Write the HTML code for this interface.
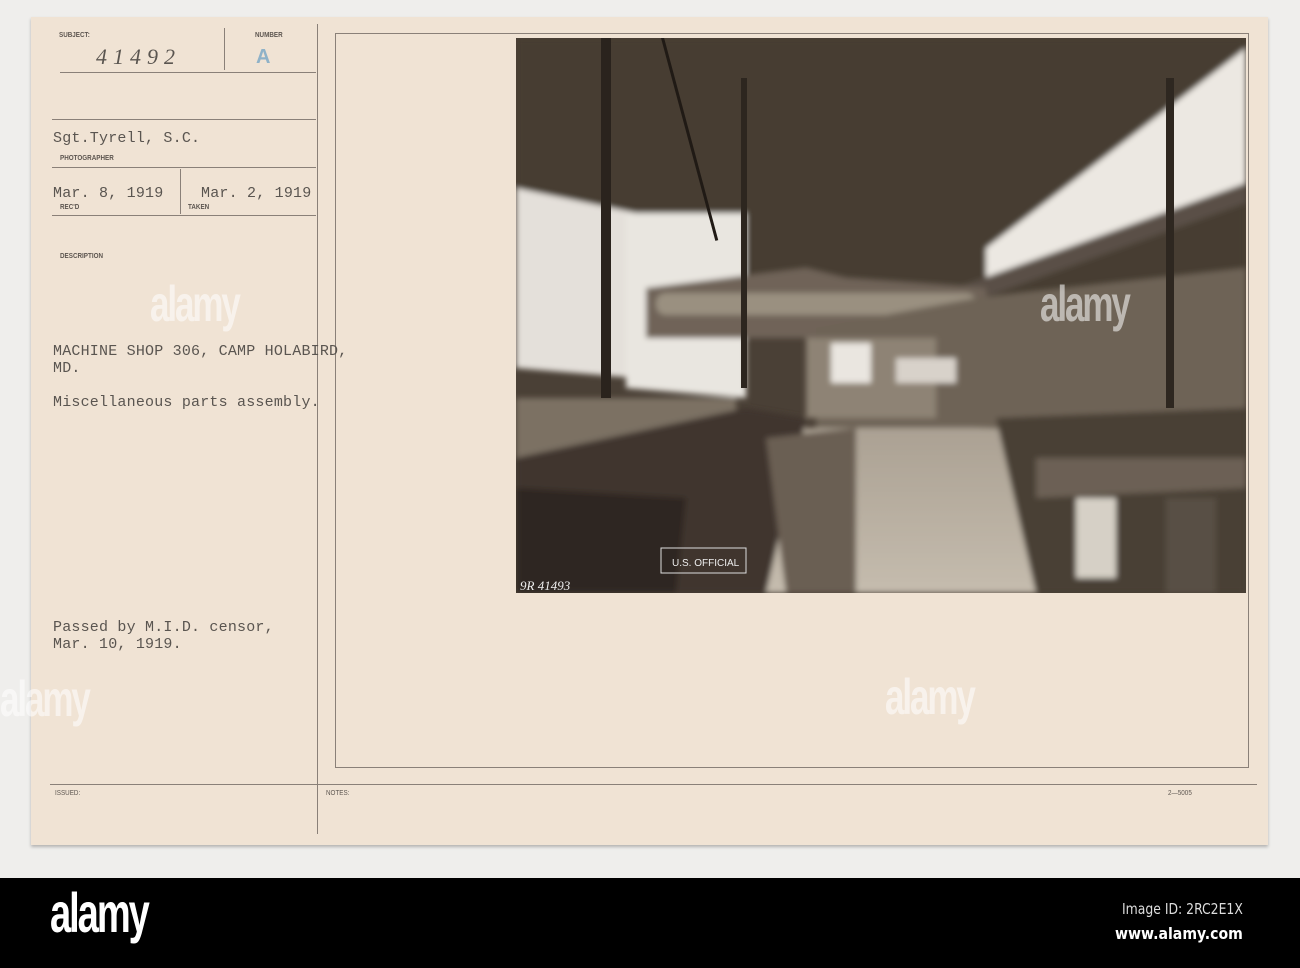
<!DOCTYPE html>
<html><head><meta charset="utf-8"><style>
body{margin:0;width:1300px;height:968px;background:#efeeec;position:relative;overflow:hidden;font-family:"Liberation Mono",monospace}
.card{position:absolute;left:31px;top:17px;width:1237px;height:828px;background:#f0e3d4;box-shadow:0 2px 3px rgba(0,0,0,.25)}
.a{position:absolute}
.h{position:absolute;height:1px;background:#8a8078}
.v{position:absolute;width:1px;background:#8a8078}
.lbl{position:absolute;font-family:"Liberation Sans",sans-serif;font-weight:bold;font-size:7px;color:#5d5650;transform:scaleX(.9);transform-origin:left}
.t{position:absolute;font-size:15px;color:#5a5550;white-space:pre;letter-spacing:.2px}
.wm{position:absolute;font-family:"Liberation Sans",sans-serif;font-weight:bold;color:rgba(255,255,255,.55);letter-spacing:-3px;transform:scaleX(.7);transform-origin:left}
.bar{position:absolute;left:0;top:878px;width:1300px;height:90px;background:#000}
</style></head><body>
<div class="card"></div>
<div class="h" style="left:60px;top:72px;width:256px"></div>
<div class="v" style="left:224px;top:28px;height:42px"></div>
<div class="h" style="left:52px;top:119px;width:264px"></div>
<div class="h" style="left:52px;top:167px;width:264px"></div>
<div class="v" style="left:180px;top:169px;height:45px"></div>
<div class="h" style="left:52px;top:215px;width:264px"></div>
<div class="v" style="left:317px;top:24px;height:810px"></div>
<div class="v" style="left:335px;top:33px;height:734px"></div>
<div class="h" style="left:335px;top:33px;width:913px"></div>
<div class="v" style="left:1248px;top:33px;height:734px"></div>
<div class="h" style="left:335px;top:767px;width:914px"></div>
<div class="h" style="left:50px;top:784px;width:1207px"></div>

<div class="lbl" style="left:59px;top:32px">SUBJECT:</div>
<div class="lbl" style="left:255px;top:32px">NUMBER</div>
<div class="a" style="left:96px;top:44px;font-family:'Liberation Serif',serif;font-style:italic;font-size:22px;color:#5a5550;letter-spacing:6px">41492</div>
<div class="a" style="left:256px;top:46px;font-family:'Liberation Sans',sans-serif;font-weight:bold;font-size:20px;color:#8fb2c8">A</div>
<div class="t" style="left:53px;top:130px">Sgt.Tyrell, S.C.</div>
<div class="lbl" style="left:60px;top:155px">PHOTOGRAPHER</div>
<div class="t" style="left:53px;top:185px">Mar. 8, 1919</div>
<div class="lbl" style="left:60px;top:204px">REC'D</div>
<div class="t" style="left:201px;top:185px">Mar. 2, 1919</div>
<div class="lbl" style="left:188px;top:204px">TAKEN</div>
<div class="lbl" style="left:60px;top:253px">DESCRIPTION</div>
<div class="t" style="left:53px;top:343px">MACHINE SHOP 306, CAMP HOLABIRD,</div>
<div class="t" style="left:53px;top:360px">MD.</div>
<div class="t" style="left:53px;top:394px">Miscellaneous parts assembly.</div>
<div class="t" style="left:53px;top:619px">Passed by M.I.D. censor,</div>
<div class="t" style="left:53px;top:636px">Mar. 10, 1919.</div>
<div class="lbl" style="left:55px;top:790px;font-weight:normal">ISSUED:</div>
<div class="lbl" style="left:326px;top:790px;font-weight:normal">NOTES:</div>
<div class="lbl" style="left:1168px;top:790px;font-weight:normal">2—5005</div>

<svg class="a" style="left:516px;top:38px" width="730" height="555" viewBox="0 0 730 555">
<defs><filter id="b"><feGaussianBlur stdDeviation="3"/></filter>
<linearGradient id="fl" x1="0" y1="0" x2="0" y2="1"><stop offset="0" stop-color="#a69c8e"/><stop offset="1" stop-color="#c5bcae"/></linearGradient></defs>
<rect width="730" height="555" fill="#4a4036"/>
<g filter="url(#b)">
<rect x="0" y="0" width="730" height="260" fill="#463c33"/>
<polygon points="0,150 120,175 120,340 0,330" fill="#e4e0da"/>
<polygon points="110,175 230,175 230,360 110,350" fill="#e9e6e0"/>
<polygon points="470,210 730,10 730,145 470,250" fill="#ece8e2"/>
<polygon points="440,250 730,145 730,165 440,270" fill="#5a5046"/>
<polygon points="130,250 290,230 330,240 470,250 470,300 130,300" fill="#706458"/>
<rect x="140" y="255" width="320" height="22" fill="#9a9080" rx="10"/>
<polygon points="300,290 460,260 730,230 730,410 300,390" fill="#6e6356"/>
<rect x="290" y="300" width="130" height="80" fill="#8e8374"/>
<rect x="315" y="305" width="40" height="40" fill="#eae6e0"/>
<rect x="380" y="320" width="60" height="25" fill="#d8d2ca"/>
<polygon points="0,360 140,360 230,380 290,390 460,390 730,400 730,555 0,555" fill="url(#fl)"/>
<rect x="0" y="360" width="220" height="120" fill="#7c7164"/>
<polygon points="0,420 230,370 290,380 250,555 0,555" fill="#3f362e"/>
<polygon points="0,450 170,460 160,555 0,555" fill="#2f2822"/>
<polygon points="250,400 340,390 340,555 270,555" fill="#6b5f52"/>
<polygon points="480,380 730,370 730,555 520,555" fill="#4a4036"/>
<polygon points="520,420 730,420 730,450 520,460" fill="#6c6154"/>
<rect x="560" y="460" width="40" height="80" fill="#d6d0c6"/>
<rect x="650" y="460" width="50" height="95" fill="#594f44"/>
</g>
<rect x="85" y="0" width="10" height="360" fill="#2a231d"/>
<rect x="225" y="40" width="6" height="310" fill="#2d261f"/>
<rect x="145" y="0" width="3" height="210" fill="#201a15" transform="rotate(-15 145 0)"/>
<rect x="650" y="40" width="8" height="330" fill="#2e2720"/>
<rect x="145" y="510" width="85" height="25" fill="none" stroke="#ddd" stroke-width="1"/>
<text x="156" y="528" font-family="Liberation Sans,sans-serif" font-size="10" fill="#eee">U.S. OFFICIAL</text>
<text x="4" y="552" font-family="Liberation Serif,serif" font-style="italic" font-size="13" fill="#eee">9R 41493</text>
</svg>

<div class="wm" style="left:150px;top:275px;font-size:50px">alamy</div>
<div class="wm" style="left:1040px;top:275px;font-size:50px">alamy</div>
<div class="wm" style="left:0px;top:670px;font-size:50px">alamy</div>
<div class="wm" style="left:885px;top:668px;font-size:50px">alamy</div>

<div class="bar"></div>
<div class="a" style="left:50px;top:880px;font-family:'Liberation Sans',sans-serif;font-weight:bold;font-size:56px;color:#fff;letter-spacing:-3px;transform:scaleX(.68);transform-origin:left">alamy</div>
<div class="a" style="left:1122px;top:900px;font-family:'DejaVu Sans Condensed','Liberation Sans',sans-serif;font-size:15px;color:#ddd;transform:scaleX(.92);transform-origin:left">Image ID: 2RC2E1X</div>
<div class="a" style="left:1115px;top:924px;font-family:'DejaVu Sans Condensed','Liberation Sans',sans-serif;font-weight:bold;font-size:16px;color:#fff;transform:scaleX(.98);transform-origin:left">www.alamy.com</div>
</body></html>
